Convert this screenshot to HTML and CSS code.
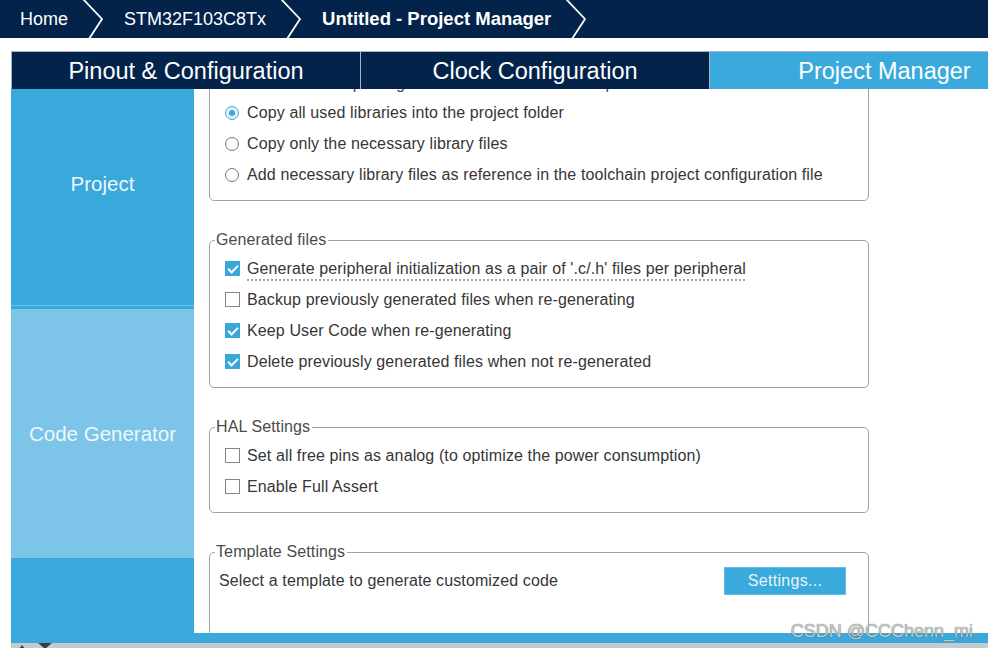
FILE: index.html
```html
<!DOCTYPE html>
<html lang="en">
<head>
    <meta charset="UTF-8">
    <title>Untitled - Project Manager</title>
    <link rel="stylesheet" href="styles.css">
</head>
<body>
    <div class="breadcrumb">
        <span class="crumb">Home</span>
        <svg class="chevron" viewBox="0 0 22 38"><polyline points="1,-1 20,19 7,39"/></svg>
        <span class="crumb">STM32F103C8Tx</span>
        <svg class="chevron" viewBox="0 0 22 38"><polyline points="1,-1 20,19 7,39"/></svg>
        <span class="crumb current">Untitled - Project Manager</span>
        <svg class="chevron" viewBox="0 0 22 38"><polyline points="1,-1 20,19 7,39"/></svg>
    </div>

    <div class="app">
        <div class="tabs">
            <div class="tab">Pinout &amp; Configuration</div>
            <div class="tab">Clock Configuration</div>
            <div class="tab active">Project Manager</div>
        </div>

        <div class="workspace">
            <nav class="sidebar">
                <div class="side-item project">Project</div>
                <div class="side-item selected">Code Generator</div>
            </nav>

            <main class="content">
                <fieldset class="group first">
                    <legend>STM32Cube MCU packages and embedded software packs</legend>
                    <div class="row"><span class="radio on"></span>Copy all used libraries into the project folder</div>
                    <div class="row"><span class="radio"></span>Copy only the necessary library files</div>
                    <div class="row"><span class="radio"></span>Add necessary library files as reference in the toolchain project configuration file</div>
                </fieldset>

                <fieldset class="group">
                    <legend>Generated files</legend>
                    <div class="row"><span class="box on"></span><span class="dotted">Generate peripheral initialization as a pair of '.c/.h' files per peripheral</span></div>
                    <div class="row"><span class="box"></span>Backup previously generated files when re-generating</div>
                    <div class="row"><span class="box on"></span>Keep User Code when re-generating</div>
                    <div class="row"><span class="box on"></span>Delete previously generated files when not re-generated</div>
                </fieldset>

                <fieldset class="group">
                    <legend>HAL Settings</legend>
                    <div class="row"><span class="box"></span>Set all free pins as analog (to optimize the power consumption)</div>
                    <div class="row"><span class="box"></span>Enable Full Assert</div>
                </fieldset>

                <fieldset class="group template">
                    <legend>Template Settings</legend>
                    <div class="template-row">
                        <span>Select a template to generate customized code</span>
                        <button class="btn">Settings...</button>
                    </div>
                </fieldset>
            </main>
        </div>

        <div class="status-bar"></div>
        <div class="scroll-strip">
            <span class="arrow up"></span>
            <span class="arrow down"></span>
        </div>
    </div>

    <div class="watermark">CSDN @CCChenn_mi</div>
</body>
</html>
```

FILE: styles.css
```css
:root {
    --navy: #03234b;
    --blue: #39a8db;
    --blue-light: #7dc5e8;
    --tab-border: #a7b3c2;
    --text: #363636;
    --frame: #9ca3ab;
}

body {
    margin: 0;
    width: 988px;
    height: 648px;
    overflow: hidden;
    position: relative;
    background: #fff;
    font-family: "Liberation Sans", Arial, sans-serif;
}

/* breadcrumb */
.breadcrumb {
    display: flex;
    align-items: center;
    height: 38px;
    padding-left: 20px;
    background: var(--navy);
    color: #fff;
    font-size: 18px;
    overflow: hidden;
}

.crumb {
    white-space: nowrap;
}

.crumb.current {
    font-weight: bold;
    font-size: 18.5px;
}

.chevron {
    flex: none;
    width: 22px;
    height: 38px;
    margin: 0 20px 0 14px;
    overflow: visible;
}

.chevron polyline {
    fill: none;
    stroke: #fff;
    stroke-width: 1.8;
}

/* main window */
.app {
    margin-top: 13px;
    padding-left: 11px;
}

.tabs {
    display: flex;
    height: 38px;
    overflow: hidden;
}

.tab {
    flex: none;
    width: 349px;
    box-sizing: border-box;
    display: flex;
    align-items: center;
    justify-content: center;
    padding-top: 1px;
    border-top: 1px solid var(--tab-border);
    border-right: 1px solid var(--tab-border);
    background: var(--navy);
    color: #fff;
    font-size: 23.5px;
    white-space: nowrap;
}

.tab:first-child {
    width: 350px;
    border-left: 1px solid var(--tab-border);
}

.tab.active {
    background: #3aa9dc;
    border-right: none;
}

.workspace {
    display: flex;
    height: 544px;
}

.sidebar {
    flex: none;
    width: 183px;
    background: var(--blue);
    color: #eef7fc;
    font-size: 20.5px;
}

.side-item {
    display: flex;
    align-items: center;
    justify-content: center;
    box-sizing: border-box;
}

.side-item.project {
    height: 217px;
    padding-bottom: 26px;
    border-bottom: 1px solid #74c3e8;
}

.side-item.selected {
    height: 249px;
    margin-top: 3px;
    background: var(--blue-light);
}

.content {
    flex: 1;
    overflow: hidden;
    padding-left: 15px;
    color: var(--text);
    font-size: 16px;
    letter-spacing: 0.12px;
}

/* option groups */
.group {
    width: 660px;
    min-width: 0;
    box-sizing: border-box;
    margin: 0 0 30px;
    padding: 4px 0 10px 5px;
    border: 1px solid var(--frame);
    border-radius: 5px;
}

.group.first {
    margin-top: -14px;
}

.group legend {
    padding: 0 2px 0 1px;
    line-height: 18px;
    color: #4b4b4b;
}

.row {
    display: flex;
    align-items: center;
    height: 31px;
    padding-left: 10px;
    white-space: nowrap;
}

.box {
    position: relative;
    flex: none;
    width: 15px;
    height: 15px;
    box-sizing: border-box;
    margin-right: 7px;
    border: 1px solid #858585;
    background: #fff;
}

.box.on {
    background: #3aa7db;
    border-color: #3aa7db;
}

.box.on::after {
    content: "";
    position: absolute;
    left: 4px;
    top: 1px;
    width: 4px;
    height: 8px;
    border: solid #fff;
    border-width: 0 2px 2px 0;
    transform: rotate(45deg);
}

.radio {
    position: relative;
    flex: none;
    width: 14px;
    height: 14px;
    box-sizing: border-box;
    margin-right: 8px;
    border: 1px solid #737373;
    border-radius: 50%;
}

.radio.on {
    border-color: #4ea5d4;
    background: #e0f0f9;
}

.radio.on::after {
    content: "";
    position: absolute;
    left: 3px;
    top: 3px;
    width: 6px;
    height: 6px;
    border-radius: 50%;
    background: #3aa7db;
}

.dotted {
    text-decoration: underline dotted #8a8a8a;
    text-underline-offset: 6px;
}

.group.template {
    padding-bottom: 40px;
}

.template-row {
    display: flex;
    align-items: center;
    justify-content: space-between;
    margin-top: 2px;
    padding: 0 22px 0 4px;
}

.btn {
    width: 122px;
    height: 28px;
    border: 1px solid #62bce6;
    background: #3aa9dc;
    color: #e8f5fc;
    font-family: inherit;
    font-size: 16px;
    letter-spacing: 0.3px;
}

/* bottom bars */
.status-bar {
    height: 10px;
    background: var(--blue);
}

.scroll-strip {
    display: flex;
    gap: 12px;
    height: 5px;
    padding-left: 7px;
    background: #c3cbd0;
    overflow: hidden;
}

.arrow {
    width: 0;
    height: 0;
    border-left: 4px solid transparent;
    border-right: 4px solid transparent;
}

.arrow.up {
    margin-top: 2px;
    border-bottom: 5px solid #3a3f44;
}

.arrow.down {
    border-left-width: 7px;
    border-right-width: 7px;
    border-top: 6px solid #3a3f44;
}

.watermark {
    position: absolute;
    right: 15px;
    top: 621px;
    font-size: 18px;
    color: #c9c9c9;
    text-shadow: 0 0 1px #4a4a4a;
    white-space: nowrap;
}
```
